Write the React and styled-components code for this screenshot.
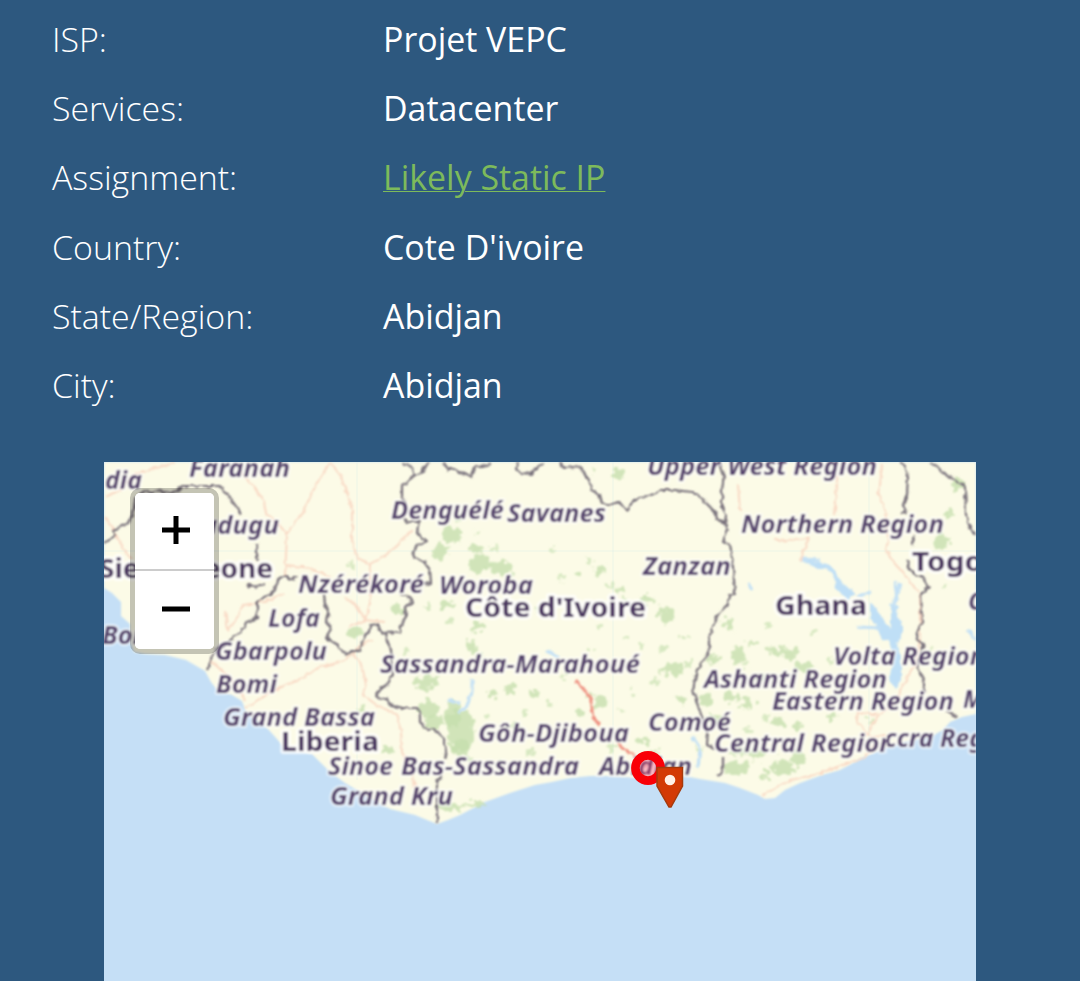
import styled, { createGlobalStyle } from "styled-components";

const details = [
  { label: "ISP:", value: "Projet VEPC" },
  { label: "Services:", value: "Datacenter" },
  { label: "Assignment:", value: "Likely Static IP", link: true },
  { label: "Country:", value: "Cote D'ivoire" },
  { label: "State/Region:", value: "Abidjan" },
  { label: "City:", value: "Abidjan" },
];

const land =
  "M104 462H976V714L962 717 950 722 943 730 932 736 905 742 885 748 862 758 840 770 822 775 800 783 785 790 775 798 765 799 758 795 740 788 725 783 700 779 685 776 665 777 640 778 610 776 590 776 570 778 552 782 535 785 510 793 485 802 460 815 448 820 437 824 427 820 415 815 390 809 370 798 345 783 330 772 322 764 312 754 285 748 268 729 246 712 242 701 232 695 218 691 211 682 205 671 186 660 165 655 145 654 134 652 130 640 130 624 121 616 121 602 112 593 104 588Z";

const borders = [
  "M104 543L108 541 115 536 114 530 122 526 128 523 133 515 135 500 143 491 152 493 160 490 165 493 178 491 182 486H221L223 491 229 496 233 503 238 508 241 515",
  "M257 543L257 556 258 561M248 588L250 584 255 588 260 585 266 584",
  "M207 670L211 661 214 652 222 646 232 639 243 629 247 622 257 618 257 603 264 597 270 595 275 590 277 580 283 576 288 576 290 580 298 577",
  "M324 594L325 605 329 613 327 621 331 629 326 637 333 642 338 645 343 653 348 654 351 651 360 651 363 640 365 635 369 632 370 625 378 624 380 630 386 633 400 632 402 622 406 617 405 608 412 603 410 597 400 595",
  "M402 462L404 465 411 466 414 476 402 486 402 497 405 506M414 476L422 472 428 462",
  "M404 518L407 522 416 522 419 520 417 533 427 541 416 546 413 557 424 562 430 570 431 584 422 583",
  "M380 630L386 634 388 642 391 650 392 674 388 684 383 687 376 695 382 700 386 698 390 705 402 708 417 708 420 712 420 722 428 730 434 729 444 738 444 745 447 750 445 758",
  "M442 776L437 781 437 823",
  "M443 462L448 469 455 469 459 473 466 474 471 477 475 467 482 466 491 464",
  "M518 462L516 469 520 473 532 474 536 468 544 463",
  "M560 463L565 468 573 467 581 468 585 475 589 480 592 490 599 495 602 502 608 505 618 502 628 510 632 502 639 497 649 496 662 490 675 490 692 492 695 494 701 497 706 503 714 511 717 519 724 523 727 516 722 507 722 490 724 474 718 462",
  "M723 521L728 530 723 542 730 545 731 550 733 568 735 594 729 595 728 604 719 613 712 628 709 638 709 653 697 670 693 690 698 706 704 723 708 733 707 745 715 749",
  "M723 757L723 768 721 774 717 776",
  "M900 462L905 466 908 475 907 495 903 505 907 514M901 514L907 510M915 535L912 545M907 560L910 570 917 576 923 578 929 588 921 593 922 622 916 635 917 640 924 644 917 668 924 681 924 692M946 712L952 713 957 718",
  "M930 462L950 477 965 486 966 515 970 528 976 535",
];

const roads = [
  "M106 497L120 490 134 475 155 468 175 463M238 470L252 484 264 502 266 514 279 525 287 534 285 575M287 534L304 510 316 485 330 462",
  "M330 462L340 475 347 493 352 510 352 540 357 558 370 564 386 555 398 545 413 529M370 564L370 603 365 620 356 605 345 598M104 516L113 529 124 550 132 560M286 565L310 568 330 577",
  "M225 612L228 630 236 620 243 605 264 602 285 593M350 627L365 620 385 622",
  "M246 708L270 692 300 679 320 667 345 661 353 653 362 645 373 640M353 653L361 664 366 683 363 695 378 706 396 714 401 730 402 752 412 775 419 800M210 660L232 680 245 700",
  "M837 475L836 500 834 515M882 465L880 485 878 493 885 509 888 540 886 550 895 564 909 580 918 592M774 538L780 541 809 538 800 560M738 485L740 510",
  "M885 735L872 738 864 731 857 720 858 712 880 715M876 745L864 758 840 766 815 775 790 780 763 795",
  "M920 640L915 665 901 688 898 700 880 714 866 736M920 594L920 640",
];

const lakes = [
  "M837 574L842 583 856 594 848 600 836 588 834 576 827 568 819 569 801 560 820 562 828 564Z",
  "M870 602L878 612 886 623 891 629 891 612 889 603 898 606 897 617 902 622 902 636 897 643 901 656 901 680 895 688 889 682 893 655 889 641 882 640 876 625 870 618Z",
];

const streams = [
  "M858 596L872 592M895 582L897 600M900 583L893 608M856 627L882 628M968 630L976 640M547 650L558 658M748 583L752 590M692 736L700 748 698 768M820 560L800 559",
  "M472 678L472 692 466 708 458 712M448 700L460 704",
];

// [cx, cy, rx, ry]
const forests = [
  [452, 534, 10, 8], [440, 552, 9, 7], [480, 563, 11, 9], [500, 568, 12, 6], [475, 548, 7, 4],
  [447, 605, 8, 5], [478, 626, 7, 5], [618, 474, 6, 5], [594, 471, 3, 3], [666, 615, 8, 8],
  [728, 624, 5, 6], [600, 570, 6, 5], [578, 575, 3, 4], [620, 590, 5, 3], [647, 600, 7, 4],
  [355, 632, 8, 6], [397, 609, 8, 5], [958, 484, 7, 6], [941, 542, 9, 7], [949, 514, 3, 3],
  [426, 682, 12, 7], [429, 709, 11, 9], [434, 722, 9, 8], [471, 647, 5, 7], [453, 715, 8, 13],
  [460, 730, 14, 22], [461, 748, 9, 8], [492, 693, 4, 4], [510, 689, 5, 6], [534, 694, 5, 4],
  [515, 727, 7, 3], [362, 708, 4, 4], [388, 750, 6, 4], [450, 807, 15, 4], [475, 804, 13, 3],
  [643, 741, 7, 3], [672, 669, 11, 7], [601, 703, 8, 6], [581, 711, 4, 4], [713, 659, 7, 4],
  [738, 656, 7, 8], [706, 700, 6, 6], [714, 719, 8, 5], [730, 697, 8, 6], [747, 704, 7, 5],
  [735, 768, 13, 7], [757, 754, 8, 6], [740, 752, 8, 3], [782, 767, 11, 9], [799, 759, 7, 8],
  [790, 654, 8, 5], [803, 667, 9, 4], [778, 722, 8, 5], [797, 726, 5, 3], [831, 718, 5, 4],
  [760, 678, 5, 4], [753, 643, 6, 3], [775, 651, 8, 4], [765, 776, 4, 5], [682, 700, 5, 4],
];

const specks = [
  [478, 533], [494, 548], [458, 520], [512, 575], [590, 560], [551, 551], [350, 565], [406, 650],
  [562, 577], [610, 586], [624, 598], [684, 637], [626, 638], [480, 655], [502, 660], [564, 676],
  [590, 695], [632, 690], [655, 680], [688, 664], [622, 712], [524, 712], [550, 704], [486, 716],
  [467, 758], [500, 765], [531, 752], [612, 748], [655, 752], [748, 730], [765, 718], [830, 660],
  [768, 625], [945, 586], [814, 632], [840, 697], [870, 720], [936, 664], [930, 650], [590, 650],
  [663, 650], [641, 646], [698, 750], [746, 666], [538, 610], [598, 627], [450, 620], [428, 607],
];

// x and width are in map units, y is the text baseline
const regions = [
  { text: "dia", x: 105, y: 489, width: 37 },
  { text: "Faranah", x: 189, y: 477, width: 101 },
  { text: "adugu", x: 202, y: 534, width: 77 },
  { text: "Bon", x: 102, y: 644, width: 46 },
  { text: "Nzérékoré", x: 298, y: 593, width: 126 },
  { text: "Lofa", x: 268, y: 627, width: 52 },
  { text: "Gbarpolu", x: 215, y: 660, width: 112 },
  { text: "Bomi", x: 216, y: 693, width: 61 },
  { text: "Grand Bassa", x: 223, y: 726, width: 152 },
  { text: "Sinoe", x: 328, y: 775, width: 65 },
  { text: "Bas-Sassandra", x: 401, y: 775, width: 178 },
  { text: "Grand Kru", x: 330, y: 805, width: 123 },
  { text: "Denguélé", x: 391, y: 519, width: 113 },
  { text: "Savanes", x: 507, y: 522, width: 99 },
  { text: "Woroba", x: 439, y: 594, width: 94 },
  { text: "Sassandra-Marahoué", x: 380, y: 673, width: 260 },
  { text: "Gôh-Djiboua", x: 478, y: 742, width: 151 },
  { text: "Comoé", x: 648, y: 731, width: 83 },
  { text: "Abidjan", x: 599, y: 775, width: 93 },
  { text: "Zanzan", x: 643, y: 575, width: 88 },
  { text: "Upper West Region", x: 647, y: 475, width: 230 },
  { text: "Northern Region", x: 741, y: 533, width: 203 },
  { text: "Volta Region", x: 833, y: 665, width: 152 },
  { text: "Ashanti Region", x: 704, y: 688, width: 183 },
  { text: "Eastern Region", x: 772, y: 710, width: 182 },
  { text: "Maritime", x: 963, y: 708, width: 104 },
  { text: "Central Region", x: 714, y: 752, width: 181, clip: "url(#tile-west)" },
  { text: "Accra Region", x: 869, y: 747, width: 152, clip: "url(#tile-east)" },
  { text: "Centrale", x: 968, y: 610, width: 100 },
];

const countries = [
  { text: "Sierra Leone", x: 99, y: 578, width: 174 },
  { text: "Liberia", x: 281, y: 751, width: 98 },
  { text: "Côte d'Ivoire", x: 465, y: 617, width: 181 },
  { text: "Ghana", x: 775, y: 615, width: 92 },
  { text: "Togo", x: 912, y: 571, width: 71 },
];

const App = () => {
  return (
    <>
      <GlobalStyle />
      <Container>
        <Details>
          {details.map(({ label, value, link }) => (
            <Row key={label}>
              <Label>{label}</Label>
              <Value>{link ? <Link href="#">{value}</Link> : value}</Value>
            </Row>
          ))}
        </Details>
        <MapFrame>
          <MapTiles />
          <ZoomControl>
            <ZoomButton aria-label="Zoom in">
              <svg width="28" height="28" viewBox="0 0 28 28">
                <path d="M0 14H28M14 0V28" stroke="#000" strokeWidth="5" />
              </svg>
            </ZoomButton>
            <ZoomButton aria-label="Zoom out" $last>
              <svg width="28" height="28" viewBox="0 0 28 28">
                <path d="M0 14H28" stroke="#000" strokeWidth="5" />
              </svg>
            </ZoomButton>
          </ZoomControl>
        </MapFrame>
      </Container>
    </>
  );
};

const MapTiles = () => (
  <MapSvg viewBox="104 462 872 519">
    <defs>
      <clipPath id="tile-west">
        <rect x="104" y="462" width="783" height="519" />
      </clipPath>
      <clipPath id="tile-east">
        <rect x="887" y="462" width="89" height="519" />
      </clipPath>
      <filter id="soft" filterUnits="userSpaceOnUse" x="94" y="452" width="892" height="539">
        <feGaussianBlur stdDeviation="0.85" />
      </filter>
      <filter id="rough" filterUnits="userSpaceOnUse" x="94" y="452" width="892" height="539">
        <feTurbulence type="fractalNoise" baseFrequency="0.16" numOctaves="2" seed="4" />
        <feDisplacementMap in="SourceGraphic" scale="15" xChannelSelector="R" yChannelSelector="G" />
        <feGaussianBlur stdDeviation="1.1" />
      </filter>
      <filter id="wobble" filterUnits="userSpaceOnUse" x="94" y="452" width="892" height="539">
        <feTurbulence type="fractalNoise" baseFrequency="0.2" numOctaves="1" seed="9" />
        <feDisplacementMap in="SourceGraphic" scale="5" xChannelSelector="R" yChannelSelector="G" />
        <feGaussianBlur stdDeviation="0.8" />
      </filter>
    </defs>

    <rect x="104" y="462" width="872" height="519" fill="#c5dff6" />
    <path d={land} fill="#fcfbe7" filter="url(#soft)" />
    <path
      d="M104 551H976M357 462V780M613 462V776M869 462V752"
      stroke="#dcebe7"
      strokeOpacity="0.45"
      fill="none"
    />
    <g filter="url(#rough)" fill="#c5deae">
      {forests.map(([cx, cy, rx, ry]) => (
        <ellipse key={`${cx}-${cy}`} cx={cx} cy={cy} rx={rx} ry={ry} fillOpacity="0.8" />
      ))}
      {specks.map(([cx, cy]) => (
        <circle key={`${cx}-${cy}`} cx={cx} cy={cy} r="3" fillOpacity="0.65" />
      ))}
    </g>
    <g filter="url(#wobble)">
      {lakes.map((d) => (
        <path key={d} d={d} fill="#bfdff6" />
      ))}
      {streams.map((d) => (
        <path key={d} d={d} fill="none" stroke="#c5e1f5" strokeWidth="3" />
      ))}
      {roads.map((d) => (
        <Road key={d} d={d} />
      ))}
      <Road
        $main
        d="M576 681L588 694 591 700 593 717 600 725M618 742L622 748 634 755 648 767"
      />
      {borders.map((d) => (
        <Border key={d} d={d} />
      ))}
    </g>

    <g filter="url(#soft)">
      {regions.map(({ text, x, y, width, clip }) => (
        <g key={text} clipPath={clip}>
          <RegionName x={x} y={y} textLength={width} lengthAdjust="spacingAndGlyphs">
            {text}
          </RegionName>
        </g>
      ))}
      {countries.map(({ text, x, y, width }) => (
        <CountryName
          key={text}
          x={x}
          y={y}
          textLength={width}
          lengthAdjust="spacingAndGlyphs"
        >
          {text}
        </CountryName>
      ))}
    </g>

    <circle cx="648" cy="768" r="12.6" fill="#ff3366" fillOpacity="0.3" stroke="#f90007" strokeWidth="8.6" />
    <path
      d="M657 767.500H682.500V786L671 807H669L657 786Z"
      fill="#d33a05"
      stroke="#a63a0c"
      strokeWidth="1.500"
    />
    <circle cx="670" cy="780" r="5.300" fill="#fff1e8" />
  </MapSvg>
);

const GlobalStyle = createGlobalStyle`
  body {
    margin: 0;
    background: #2d587f;
  }
`;

const Container = styled.main`
  box-sizing: border-box;
  height: 981px;
  overflow: hidden;
  padding-top: 5px;
  color: #fff;
  background: #2d587f;
  font-family: "Open Sans", sans-serif;
  font-size: 33.9px;
`;

const Details = styled.dl`
  margin: 0 0 41.8px;
  padding-left: 52px;
`;

const Row = styled.div`
  display: grid;
  grid-template-columns: 331px 1fr;
  height: 69.2px;
  line-height: 69px;
`;

const Label = styled.dt`
  font-weight: 300;
`;

const Value = styled.dd`
  margin: 0;
`;

const Link = styled.a`
  color: #7dba5b;
  text-decoration: underline;
  text-decoration-thickness: 1px;
`;

const MapFrame = styled.div`
  position: relative;
  width: 872px;
  height: 519px;
  margin: 0 auto;
  overflow: hidden;
`;

const MapSvg = styled.svg`
  display: block;
  width: 100%;
  height: 100%;
`;

const Road = styled.path`
  fill: none;
  stroke: ${(props) => (props.$main ? "#ee9080" : "#f9dac6")};
  stroke-width: ${(props) => (props.$main ? 2.6 : 2)};
`;

const Border = styled.path`
  fill: none;
  stroke: #77707a;
  stroke-width: 2.2;
  stroke-linejoin: round;
`;

const RegionName = styled.text`
  font-family: "Noto Sans", "Open Sans", sans-serif;
  font-size: 25.5px;
  font-style: italic;
  font-weight: 700;
  fill: #56456d;
  stroke: rgba(255, 255, 255, 0.6);
  stroke-width: 4px;
  stroke-linejoin: round;
  paint-order: stroke;
`;

const CountryName = styled(RegionName)`
  font-size: 27px;
  font-style: normal;
  fill: #48355e;
  stroke: rgba(255, 255, 255, 0.75);
  stroke-width: 6px;
`;

// Sits over the map's top left corner
const ZoomControl = styled.div`
  position: absolute;
  top: 26px;
  left: 26px;
  width: 79px;
  overflow: hidden;
  background: #fff;
  background-clip: padding-box;
  border: 5px solid rgba(0, 0, 0, 0.22);
  border-radius: 10px;
`;

const ZoomButton = styled.button`
  display: flex;
  align-items: center;
  justify-content: center;
  box-sizing: border-box;
  width: 100%;
  height: 78px;
  padding: 0 0 2px 3px;
  background: #fff;
  border: 0;
  border-bottom: ${(props) => (props.$last ? "0" : "2px solid #ccc")};
  cursor: pointer;
`;

export default App;
